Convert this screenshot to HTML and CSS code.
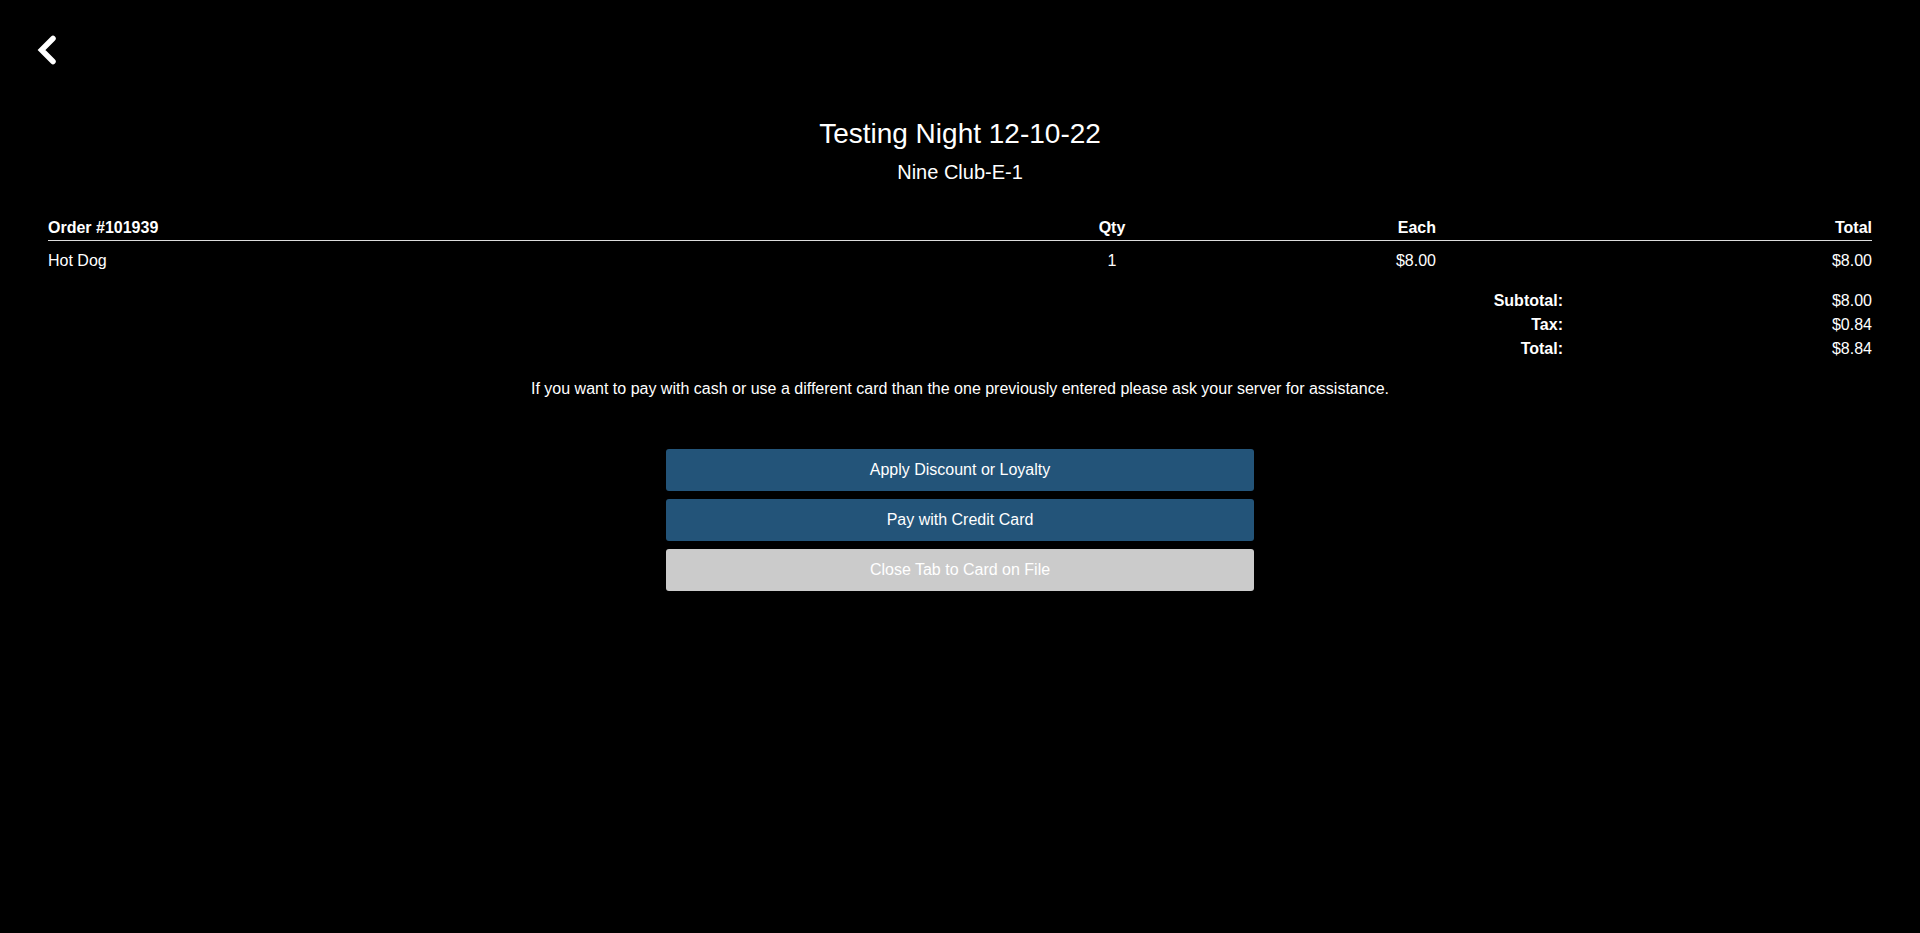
FILE: index.html
```html
<!DOCTYPE html>
<html lang="en">

<head>
    <meta charset="UTF-8">
    <meta name="viewport" content="width=device-width, initial-scale=1.0">
    <title>Check</title>
    <link rel="stylesheet" href="styles.css">
</head>

<body>
    <div class="top-bar">
        <a class="back" href="javascript:;">
            <svg width="22" height="32" viewBox="0 0 22 32">
                <polyline points="17,4.5 5.5,16 17,27.5" fill="none" stroke="#fff" stroke-width="5.5" stroke-linecap="round" stroke-linejoin="miter" />
            </svg>
        </a>
    </div>

    <div class="event">
        <h1 class="event-title">Testing Night 12-10-22</h1>
        <div class="event-table">Nine Club-E-1</div>
    </div>

    <div class="order">
        <div class="order-row order-head">
            <div class="col-name">Order #101939</div>
            <div class="col-qty">Qty</div>
            <div class="col-each">Each</div>
            <div class="col-total">Total</div>
        </div>
        <div class="order-row">
            <div class="col-name">Hot Dog</div>
            <div class="col-qty">1</div>
            <div class="col-each">$8.00</div>
            <div class="col-total">$8.00</div>
        </div>

        <div class="summary">
            <div class="summary-label">Subtotal:</div>
            <div class="summary-value">$8.00</div>
            <div class="summary-label">Tax:</div>
            <div class="summary-value">$0.84</div>
            <div class="summary-label">Total:</div>
            <div class="summary-value">$8.84</div>
        </div>
    </div>

    <p class="notice">If you want to pay with cash or use a different card than the one previously entered please ask your server for assistance.</p>

    <div class="actions">
        <a class="btn" href="javascript:;">Apply Discount or Loyalty</a>
        <a class="btn" href="javascript:;">Pay with Credit Card</a>
        <a class="btn btn-disabled" href="javascript:;">Close Tab to Card on File</a>
    </div>
</body>

</html>
```

FILE: styles.css
```css
* {
    margin: 0;
    padding: 0;
    box-sizing: border-box;
}

html,
body {
    background-color: #000;
}

body {
    color: #fff;
    font-family: "Liberation Sans", Arial, sans-serif;
    font-size: 16px;
    line-height: 24px;
    min-height: 933px;
}

a {
    text-decoration: none;
    color: #fff;
}

.top-bar {
    padding: 34px 0 0 36px;
    height: 66px;
}

.back {
    display: inline-block;
    width: 22px;
    height: 32px;
}

.back svg {
    display: block;
}

.event {
    margin-top: 52px;
    text-align: center;
}

.event-title {
    font-size: 28px;
    font-weight: normal;
    line-height: 32px;
}

.event-table {
    margin-top: 10px;
    font-size: 20px;
    line-height: 24px;
}

.order {
    margin: 32px 48px 0 48px;
}

.order-row {
    display: grid;
    grid-template-columns: 912px 304px 172px 436px;
}

.order-head {
    font-weight: bold;
    border-bottom: 1px solid #ddd;
    margin-bottom: 8px;
}

.col-qty {
    text-align: center;
}

.col-each,
.col-total {
    text-align: right;
}

.summary {
    display: grid;
    grid-template-columns: 1fr 309px;
    margin-top: 16px;
}

.summary-label {
    font-weight: bold;
    text-align: right;
}

.summary-value {
    text-align: right;
}

.notice {
    margin-top: 16px;
    text-align: center;
}

.actions {
    display: flex;
    flex-direction: column;
    gap: 8px;
    width: 588px;
    margin: 48px auto 0 auto;
}

.btn {
    display: block;
    height: 42px;
    line-height: 42px;
    text-align: center;
    background-color: #235479;
    border-radius: 3px;
}

.btn-disabled {
    background-color: #cbcbcb;
    cursor: default;
}
```
